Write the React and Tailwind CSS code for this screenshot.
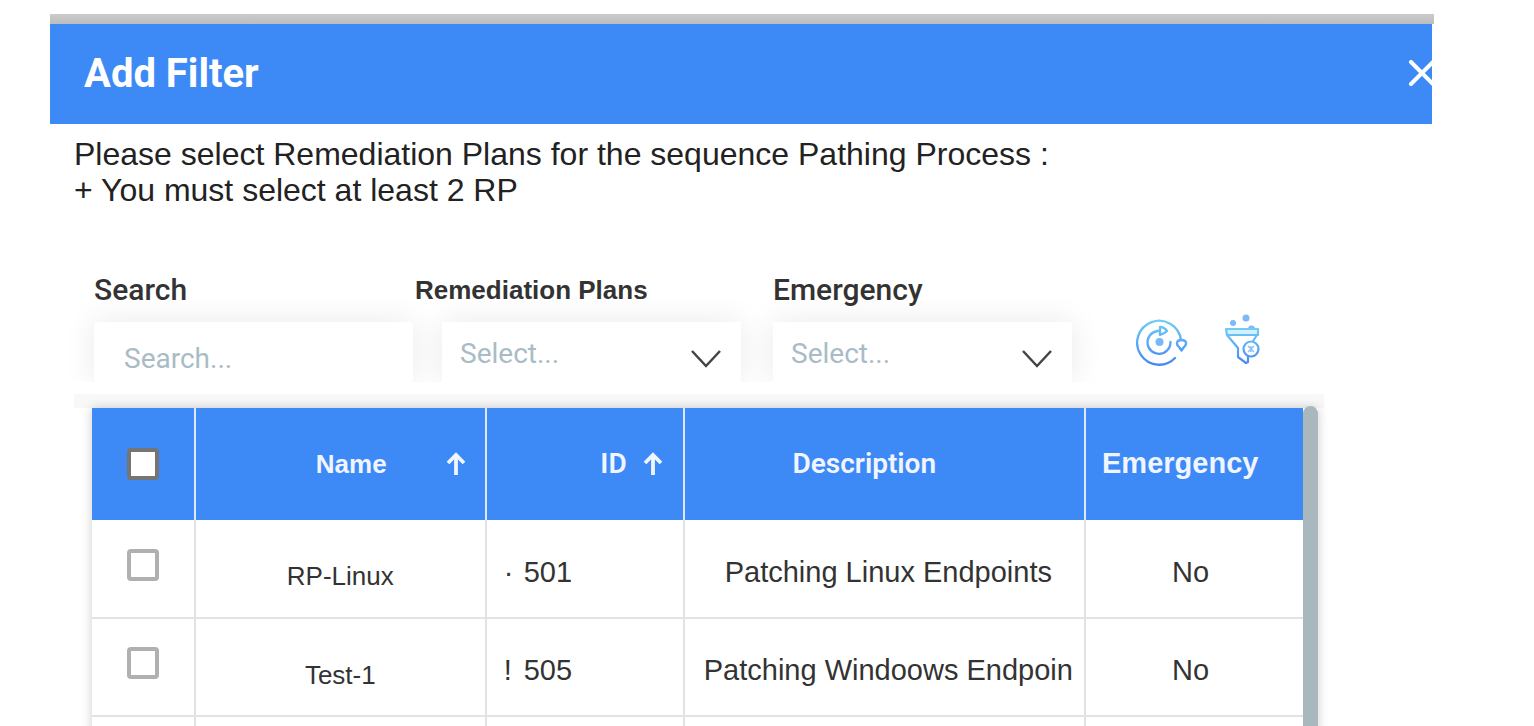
import React, { Component } from 'react';


const plans = [
    { name: 'RP-Linux', mark: '·', id: '501', description: 'Patching Linux Endpoints', emergency: 'No' },
    { name: 'Test-1', mark: '!', id: '505', description: 'Patching Windoows Endpoin', emergency: 'No' },
    { name: '', mark: '', id: '', description: '', emergency: '' },
];

function ArrowUp() {
    return (
        <svg width="20" height="24" viewBox="0 0 20 24" fill="none" stroke="currentColor" strokeWidth="3.8" aria-hidden="true">
            <path d="M10 23V3M2 11l8-8 8 8" />
        </svg>
    );
}

function ResetIcon() {
    return (
        <svg width="52" height="48" viewBox="0 0 52 48" fill="none" aria-hidden="true">
            <defs>
                <linearGradient id="reset" gradientUnits="userSpaceOnUse" x1="0" y1="2" x2="0" y2="46">
                    <stop offset="0" stopColor="#6fcdf8" />
                    <stop offset="1" stopColor="#4688f5" />
                </linearGradient>
            </defs>
            <g stroke="url(#reset)" strokeWidth="2.300" strokeLinecap="round" strokeLinejoin="round">
                <path d="M39 40A22 22 0 1 1 45 22" />
                <path d="M45.500 22c-5 0-6 4-2.500 7l2.500 3.500 2.500-3.500c3.500-3 2.500-7-2.500-7z" />
                <path d="M34.500 24A11.500 11.500 0 1 1 21 13h3" />
                <path d="M24 9c3 0 5 1 7 4-2 2-4 3-7 4z" />
            </g>
            <circle cx="23.500" cy="24" r="4" fill="#79b8f8" />
        </svg>
    );
}

function ClearFilterIcon() {
    return (
        <svg width="36" height="52" viewBox="0 0 36 52" fill="none" aria-hidden="true">
            <defs>
                <linearGradient id="funnel" gradientUnits="userSpaceOnUse" x1="0" y1="14" x2="0" y2="50">
                    <stop offset="0" stopColor="#6fcdf8" />
                    <stop offset="1" stopColor="#4688f5" />
                </linearGradient>
            </defs>
            <circle cx="9" cy="9" r="3" fill="#7db8f8" />
            <circle cx="22" cy="4" r="3.500" fill="#7db8f8" />
            <path d="M24 15a3.500 3.500 0 0 1 7 0z" fill="#7db8f8" />
            <rect x="2" y="16" width="32" height="5" fill="#d5f0fd" />
            <g stroke="url(#funnel)" strokeWidth="2.200" strokeLinejoin="round">
                <path d="M2 15h32v6H3z" />
                <path d="M3 21l11 13v9l8 6 2-1v-6M33 21l-4 6" />
                <circle cx="27" cy="35" r="7.500" />
            </g>
            <path d="M24 32l6 6M30 32l-6 6M27 32v6" stroke="#8fc2fa" strokeWidth="1.500" />
        </svg>
    );
}

function FilterSelect({ id }) {
    return (
        <div className="relative bg-white shadow-[0_0_32px_rgba(0,0,0,0.09)]">
            <select
                id={id}
                className="block w-full h-[60px] pl-[18px] pr-14 pt-1 appearance-none bg-transparent text-[28px] text-[#a9bcc6] outline-none">
                <option>Select...</option>
            </select>
            <svg className="absolute right-5 top-7 pointer-events-none" width="30" height="18" viewBox="0 0 30 18"
                fill="none" stroke="#444" strokeWidth="2.500" aria-hidden="true">
                <path d="M1 1l14 15L29 1" />
            </svg>
        </div>
    );
}

function Tick({ label, className }) {
    return (
        <input
            type="checkbox"
            aria-label={label}
            className={'block mx-auto size-8 appearance-none rounded-sm border-4 bg-white ' + className}
        />
    );
}

export default class App extends Component {

    renderHeader() {
        return (
            <header className="shrink-0 flex items-center justify-between h-[100px] pl-[34px] overflow-hidden bg-[#3d8af7] text-white">
                <h1 className="text-[40px] font-bold">Add Filter</h1>
                <button type="button" aria-label="Close" className="-mr-1">
                    <svg width="28" height="28" viewBox="0 0 28 28" stroke="currentColor" strokeWidth="4" strokeLinecap="round" aria-hidden="true">
                        <path d="M3 2l22 22M25 2L3 24" />
                    </svg>
                </button>
            </header>
        );
    }

    renderFilters() {
        return (
            <form className="shrink-0 grid grid-cols-[321fr_358fr_299fr_252fr] pl-11 pr-[108px] pt-16 overflow-hidden text-[#333]">
                <div className="pr-0.5">
                    <label htmlFor="search" className="block mb-3.5 text-[30px] leading-9 font-medium">Search</label>
                    <input
                        id="search"
                        type="text"
                        placeholder="Search..."
                        className="block w-full h-[60px] pl-[30px] pt-3 rounded-sm bg-white text-[28px] placeholder:text-[#a9bcc6] outline-none shadow-[0_0_32px_rgba(0,0,0,0.09)]"
                    />
                </div>
                <div className="pr-8">
                    <label htmlFor="plans" className="block mb-3.5 font-['Liberation_Sans',sans-serif] text-[26px] leading-9 font-bold">
                        Remediation Plans
                    </label>
                    <div className="pl-[27px]">
                        <FilterSelect id="plans" />
                    </div>
                </div>
                <div>
                    <label htmlFor="emergency" className="block mb-3.5 text-[30px] leading-9 font-medium">Emergency</label>
                    <FilterSelect id="emergency" />
                </div>
                <div className="flex items-end gap-9 pl-16 pb-4">
                    <button type="button" aria-label="Reset"><ResetIcon /></button>
                    <button type="button" aria-label="Clear filters"><ClearFilterIcon /></button>
                </div>
            </form>
        );
    }

    renderTable() {
        return (
            <table className="grow table-fixed border-collapse font-['Liberation_Sans',sans-serif] text-[29px] text-[#333]">
                <colgroup>
                    <col className="w-[103px]" />
                    <col className="w-[24%]" />
                    <col className="w-[198px]" />
                    <col />
                    <col className="w-[18%]" />
                </colgroup>
                <thead>
                    <tr className="h-28 bg-[#3d8af7] text-[#f0f5ff] divide-x-2 divide-[#dbe8fd]">
                        <th><Tick label="Select all plans" className="border-[#757575]" /></th>
                        <th>
                            <button type="button" className="flex w-full items-center justify-end gap-[59px] pr-[19px] text-[26px]">
                                Name <ArrowUp />
                            </button>
                        </th>
                        <th>
                            <button type="button" className="flex w-full items-center justify-end gap-4 pr-5 font-[Roboto] text-[28px] font-semibold">
                                ID <ArrowUp />
                            </button>
                        </th>
                        <th className="pr-10 font-[Roboto] text-[28px] font-semibold">Description</th>
                        <th className="pl-4 text-left">Emergency</th>
                    </tr>
                </thead>
                <tbody>
                    {plans.map((plan, i) => (
                        <tr key={i} className="h-[98px] bg-white border-b-2 border-[#e2e2e2] divide-x-2 divide-[#e2e2e2]">
                            <td className="pb-2">
                                <Tick label={'Select ' + plan.name} className="border-[#b0b0b0]" />
                            </td>
                            <td className="pt-4 text-center text-[26px]">{plan.name}</td>
                            <td className="pt-2">
                                <div className="flex gap-3 pl-[17px]">
                                    <span className="w-2 text-center">{plan.mark}</span>
                                    <span>{plan.id}</span>
                                </div>
                            </td>
                            <td className="pt-2 pl-2 text-center whitespace-nowrap">{plan.description}</td>
                            <td className="pt-2 pr-2 text-center">{plan.emergency}</td>
                        </tr>
                    ))}
                </tbody>
            </table>
        );
    }

    render() {
        return (
            <div className="flex flex-col h-screen pt-3.5 overflow-hidden bg-white font-[Roboto,sans-serif]">
                <div className="shrink-0 h-2.5 ml-[50px] mr-[100px] bg-linear-to-b from-[#cbcbcb] to-[#bcbcbc]" />
                <main className="flex flex-col grow min-h-0 ml-[50px] mr-[102px]">
                    {this.renderHeader()}
                    <p className="shrink-0 pt-3 pl-6 font-['Liberation_Sans',sans-serif] text-[32px] leading-9 text-[#222]">
                        Please select Remediation Plans for the sequence Pathing Process :<br />
                        + You must select at least 2 RP
                    </p>
                    {this.renderFilters()}
                    <div className="shrink-0 h-3.5 mt-3 ml-6 mr-[108px] bg-[#f8f8f8]" />
                    <div className="shrink-0 flex items-start ml-[42px] mr-[114px] shadow-[0_0_10px_rgba(0,0,0,0.2)]">
                        {this.renderTable()}
                        <div className="self-stretch w-[15px] -mt-0.5 rounded-t-lg bg-[#a9b8bd]" />
                    </div>
                </main>
            </div>
        );
    }
}
